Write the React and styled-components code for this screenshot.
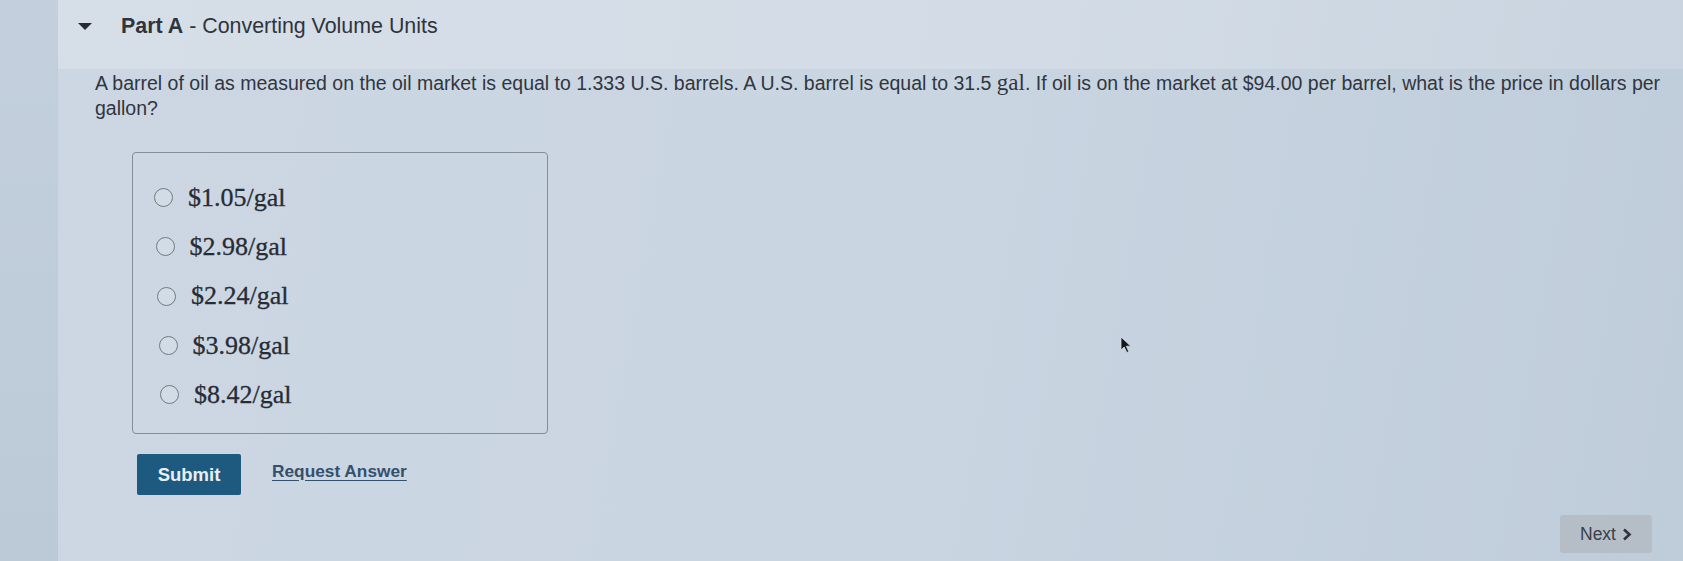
import React from 'react';
import styled, { createGlobalStyle } from 'styled-components';

const GlobalStyle = createGlobalStyle`
  html, body {
    margin: 0;
    padding: 0;
  }
  body {
    background: #c8d4e0;
    font-family: "Liberation Sans", Arial, Helvetica, sans-serif;
    color: #333a44;
  }
`;

const Page = styled.div`
  position: relative;
  display: flex;
  width: 1683px;
  height: 561px;
  overflow: hidden;
  background: linear-gradient(100deg, #ccd7e3 0%, #c9d5e1 55%, #bfccda 100%);
`;

const Gutter = styled.div`
  width: 58px;
  flex-shrink: 0;
  background: linear-gradient(180deg, #c3cfdc 0%, #bccad8 100%);
`;

const Main = styled.div`
  flex: 1;
  display: flex;
  flex-direction: column;
`;

const Header = styled.div`
  height: 69px;
  display: flex;
  align-items: flex-start;
  padding: 15px 0 0 20px;
  box-sizing: border-box;
  background: linear-gradient(100deg, #d6dee8 0%, #d3dce6 60%, #c9d4e0 100%);
`;

const Toggle = styled.span`
  width: 0;
  height: 0;
  margin-top: 8px;
  border-left: 7px solid transparent;
  border-right: 7px solid transparent;
  border-top: 7px solid #262b33;
`;

const Title = styled.h2`
  margin: 0 0 0 29px;
  font-size: 21.4px;
  line-height: 22px;
  font-weight: 400;
  color: #2f343c;
`;

const Strong = styled.span`
  font-weight: 700;
`;

const Content = styled.div`
  padding: 0 0 0 37px;
  display: flex;
  flex-direction: column;
  flex: 1;
`;

const Question = styled.p`
  margin: 2px 0 0;
  font-size: 19.5px;
  line-height: 25px;
  color: #303640;
`;

const MathUnit = styled.span`
  font-family: "Liberation Serif", "Times New Roman", serif;
  font-size: 23px;
  line-height: 1;
`;

const Choices = styled.div`
  margin: 31px 0 0 37px;
  width: 416px;
  height: 282px;
  box-sizing: border-box;
  padding: 20px 0 0 21px;
  border: 1.5px solid #868c94;
  border-radius: 4px;
  display: flex;
  flex-direction: column;
`;

const Choice = styled.label`
  height: 49.3px;
  display: flex;
  align-items: center;
  gap: 15px;
  padding-left: ${p => p.shift}px;
`;

const Radio = styled.span`
  width: 19px;
  height: 19px;
  box-sizing: border-box;
  border: 1.8px solid #737980;
  border-radius: 50%;
  background: #d2dce6;
`;

const ChoiceText = styled.span`
  font-family: "Liberation Serif", "Times New Roman", serif;
  font-size: 26px;
  color: #272c34;
  -webkit-text-stroke: 0.3px #272c34;
`;

const Actions = styled.div`
  margin: 20px 0 0 42px;
  display: flex;
  align-items: center;
  gap: 31px;
`;

const SubmitButton = styled.button`
  width: 104px;
  height: 41px;
  border: none;
  border-radius: 2px;
  background: #1e5a80;
  color: #e9eef3;
  font-family: "Liberation Sans", Arial, sans-serif;
  font-size: 18.5px;
  font-weight: 700;
`;

const RequestLink = styled.a`
  margin-top: -6px;
  font-size: 17.3px;
  font-weight: 700;
  color: #34506d;
  text-decoration: underline;
  text-underline-offset: 3px;
`;

const Footer = styled.div`
  margin-top: 20px;
  display: flex;
  justify-content: flex-end;
  padding-right: 31px;
`;

const NextButton = styled.button`
  width: 92px;
  height: 38px;
  border: none;
  border-radius: 3px;
  background: #b5bdc7;
  color: #3b4048;
  font-family: "Liberation Sans", Arial, sans-serif;
  font-size: 17.5px;
  display: flex;
  align-items: center;
  justify-content: center;
  gap: 6px;
`;

const Pointer = styled.svg`
  position: absolute;
  left: 1120px;
  top: 336px;
`;

const choices = ['$1.05/gal', '$2.98/gal', '$2.24/gal', '$3.98/gal', '$8.42/gal'];

export default function App() {
  return (
    <>
      <GlobalStyle />
      <Page>
        <Gutter />
        <Main>
          <Header>
            <Toggle />
            <Title>
              <Strong>Part A</Strong> - Converting Volume Units
            </Title>
          </Header>
          <Content>
            <Question>
              A barrel of oil as measured on the oil market is equal to 1.333 U.S. barrels. A U.S. barrel is equal to 31.5{' '}
              <MathUnit>gal</MathUnit>. If oil is on the market at $94.00 per barrel, what is the price in dollars per
              <br />
              gallon?
            </Question>
            <Choices>
              {choices.map((c, i) => (
                <Choice key={c} shift={i * 1.5}>
                  <Radio />
                  <ChoiceText>{c}</ChoiceText>
                </Choice>
              ))}
            </Choices>
            <Actions>
              <SubmitButton>Submit</SubmitButton>
              <RequestLink>Request Answer</RequestLink>
            </Actions>
            <Footer>
              <NextButton>
                Next
                <svg width="10" height="13" viewBox="0 0 10 13">
                  <path d="M2 1.5 L7.5 6.5 L2 11.5" fill="none" stroke="#2f343b" strokeWidth="2.6" />
                </svg>
              </NextButton>
            </Footer>
          </Content>
        </Main>
        <Pointer width="13" height="18" viewBox="0 0 13 18">
          <path d="M1 1 L1 14 L4.2 11 L6.8 16.5 L8.8 15.6 L6.3 10.2 L10.8 10.2 Z" fill="#15181c" stroke="#d5dde6" strokeWidth="0.8" />
        </Pointer>
      </Page>
    </>
  );
}
